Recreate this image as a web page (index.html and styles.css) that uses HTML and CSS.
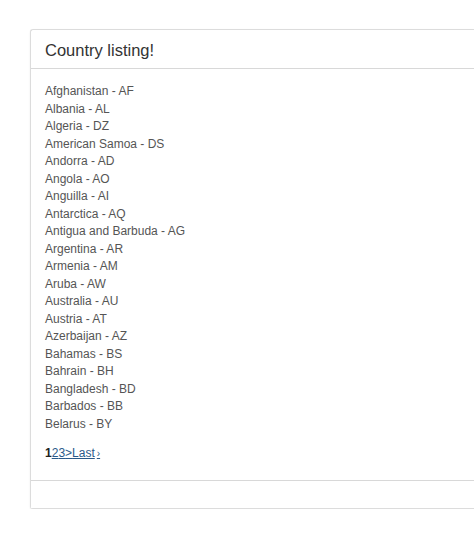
FILE: index.html
```html
<!DOCTYPE html>
<html>
<head>
<meta charset="utf-8">
<link rel="stylesheet" href="styles.css">
</head>
<body>
<div class="panel">
  <div class="panel-heading">Country listing!</div>
  <div class="panel-body">
    <ul class="countries">
      <li>Afghanistan - AF</li>
      <li>Albania - AL</li>
      <li>Algeria - DZ</li>
      <li>American Samoa - DS</li>
      <li>Andorra - AD</li>
      <li>Angola - AO</li>
      <li>Anguilla - AI</li>
      <li>Antarctica - AQ</li>
      <li>Antigua and Barbuda - AG</li>
      <li>Argentina - AR</li>
      <li>Armenia - AM</li>
      <li>Aruba - AW</li>
      <li>Australia - AU</li>
      <li>Austria - AT</li>
      <li>Azerbaijan - AZ</li>
      <li>Bahamas - BS</li>
      <li>Bahrain - BH</li>
      <li>Bangladesh - BD</li>
      <li>Barbados - BB</li>
      <li>Belarus - BY</li>
    </ul>
    <div class="pager"><strong class="current">1</strong><a href="#">2</a><a href="#">3</a><a href="#">&gt;</a><a href="#">Last<span class="raquo">›</span></a></div>
  </div>
  <div class="panel-footer"></div>
</div>
</body>
</html>
```

FILE: styles.css
```css
html, body {
  margin: 0;
  padding: 0;
  background: #fff;
}
body {
  font-family: "Liberation Sans", Arial, sans-serif;
  font-size: 12px;
  line-height: 17.5px;
  color: #555;
}
.panel {
  margin: 29px 0 0 30px;
  border: 1px solid #dcdcdc;
  border-right: none;
  border-radius: 3px 0 0 3px;
  box-shadow: 0 1px 2px rgba(0,0,0,0.08);
  background: #fff;
}
.panel-heading {
  padding: 11px 14px 8px 14px;
  font-size: 16.5px;
  line-height: 19px;
  color: #333;
  border-bottom: 1px solid #d8d8d8;
}
.panel-body {
  padding: 14px 14px 17px 14px;
}
.countries {
  list-style: none;
  margin: 0;
  padding: 0;
}
.pager {
  margin-top: 12px;
  color: #333;
}
.pager .current {
  color: #222;
}
.pager a {
  color: #2a5a8a;
  text-decoration: underline;
}
.raquo {
  font-size: 10px;
  margin-left: 2px;
}
.panel-footer {
  height: 27px;
  border-top: 1px solid #d8d8d8;
  background: #fff;
}
```
